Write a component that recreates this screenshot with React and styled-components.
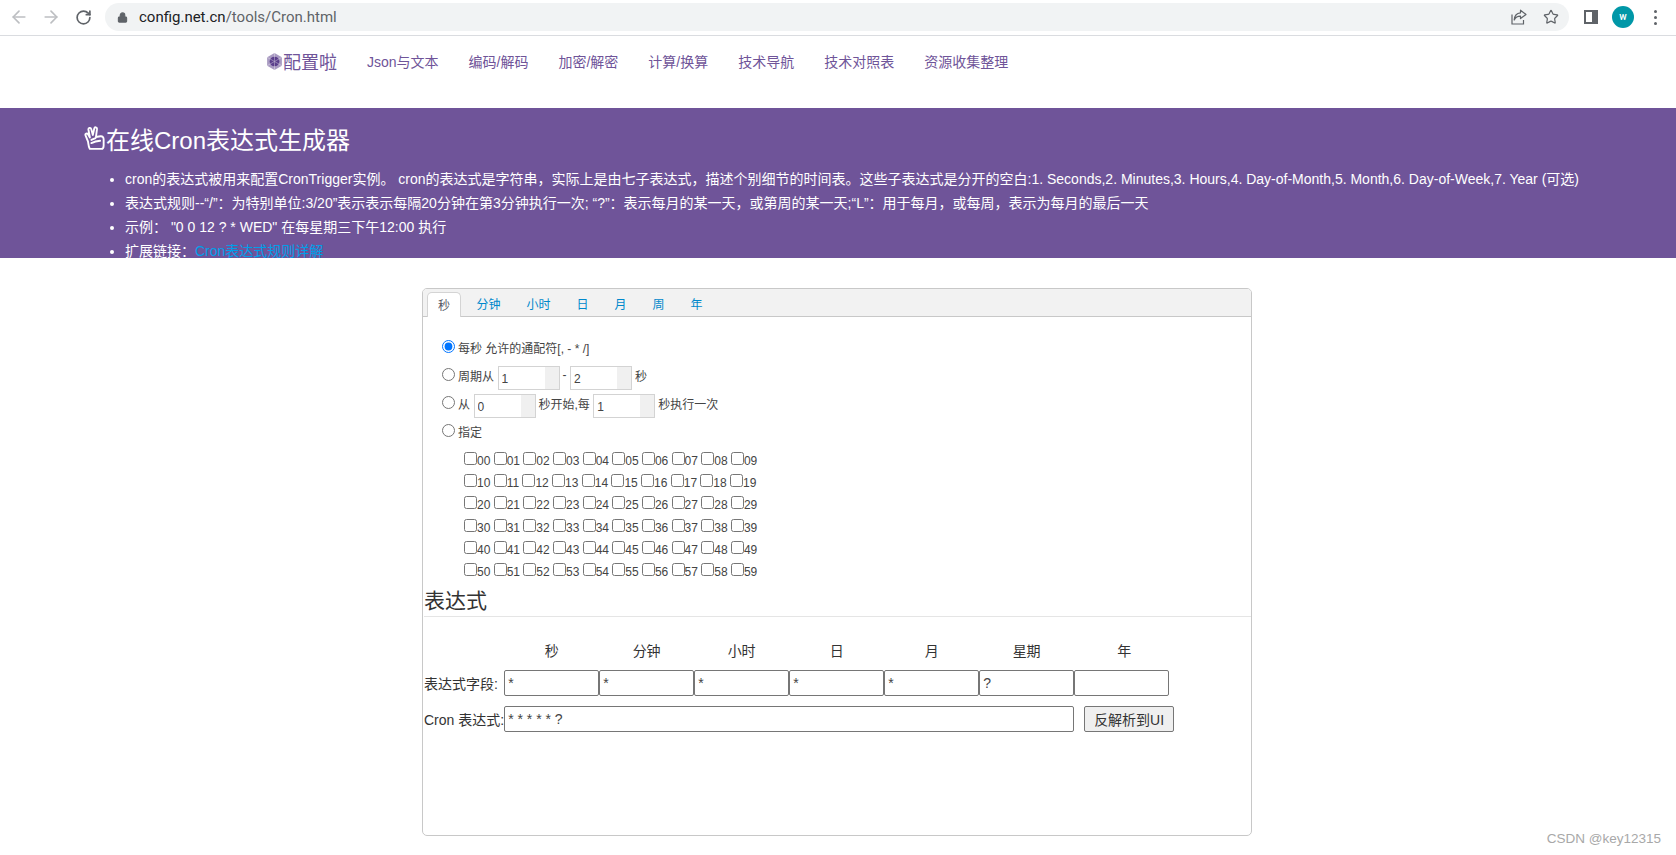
import React from "react";
import styled, { createGlobalStyle } from "styled-components";
import { ArrowLeft, ArrowRight, RotateCw, Lock, Star } from "lucide-react";

const FONT = '"Liberation Sans", "Noto Sans CJK SC", Arial, sans-serif';

const navItems = ["Json与文本", "编码/解码", "加密/解密", "计算/换算", "技术导航", "技术对照表", "资源收集整理"];
const tabs = ["秒", "分钟", "小时", "日", "月", "周", "年"];
const fieldValues = ["*", "*", "*", "*", "*", "?", ""];
const seconds = Array.from({ length: 6 }, (_, r) =>
  Array.from({ length: 10 }, (_, c) => `${r}${c}`)
);

const ShareIcon = () => (
  <svg width="16" height="16" viewBox="0 0 16 16" fill="none" stroke="#5f6368" strokeWidth="1.2">
    <path d="M1 5.5V15H12.5V11" />
    <path d="M9.5 1.2L15 5.4L9.5 9.6V7.2C6.5 7.2 4.5 8.4 3.2 11C3.4 7.2 5.6 4.2 9.5 3.8Z" strokeLinejoin="round" />
  </svg>
);

const HandIcon = () => (
  <svg width="22" height="25" viewBox="0 0 21 24" fill="none" stroke="#fff" strokeWidth="1.8" strokeLinejoin="round" strokeLinecap="round">
    <path d="M5.5 22C4 19 4.2 17 3.8 15L1.4 9C.8 7.4 2.8 6.4 3.8 8L5.6 11L4.2 3.6C3.9 1.6 6.4 1.1 6.9 3L8.4 8.6L9.8 2.4C10.2.6 12.6 1 12.4 3L11.4 10.6L15.8 9.8C18 9.6 18.8 11.2 18.8 13V18.6C18.8 20.4 18 22 16.6 22Z" />
    <path d="M7 13.4L11 11.6M7 16.4C9 15.4 12 14.4 15.4 14.2" />
  </svg>
);

const LogoIcon = () => (
  <svg width="17" height="19" viewBox="0 0 16 18">
    <polygon points="8,1 15,5 15,13 8,17 1,13 1,5" fill="#a99bc2" />
    <circle cx="8" cy="9" r="4.6" fill="#5b3f8c" />
    <path d="M8 1V17M1 5L15 13M15 5L1 13" stroke="#fff" strokeWidth=".6" opacity=".55" />
  </svg>
);

const App = () => (
  <>
    <GlobalStyle />
    <Toolbar>
      <NavIcon $off>
        <ArrowLeft size={20} strokeWidth={2} />
      </NavIcon>
      <NavIcon $off>
        <ArrowRight size={20} strokeWidth={2} />
      </NavIcon>
      <NavIcon>
        <RotateCw size={17} strokeWidth={2.4} />
      </NavIcon>
      <Omnibox>
        <Lock size={11} fill="#5f6368" strokeWidth={2.4} />
        <Url>
          config.net.cn<UrlPath>/tools/Cron.html</UrlPath>
        </Url>
        <OmniActions>
          <ShareIcon />
          <Star size={16} strokeWidth={1.8} />
        </OmniActions>
      </Omnibox>
      <SidePanelIcon />
      <Avatar>w</Avatar>
      <MenuDots>
        <i />
        <i />
        <i />
      </MenuDots>
    </Toolbar>

    <SiteNav>
      <Brand>
        <LogoIcon />
        配置啦
      </Brand>
      {navItems.map((item) => (
        <NavLink key={item} href="#">
          {item}
        </NavLink>
      ))}
    </SiteNav>

    <Banner>
      <BannerTitle>
        <HandIcon />
        在线Cron表达式生成器
      </BannerTitle>
      <BannerList>
        <li>
          cron的表达式被用来配置CronTrigger实例。 cron的表达式是字符串，实际上是由七子表达式，描述个别细节的时间表。这些子表达式是分开的空白:1. Seconds,2. Minutes,3. Hours,4. Day-of-Month,5. Month,6. Day-of-Week,7. Year (可选)
        </li>
        <li>表达式规则--“/”：为特别单位:3/20”表示表示每隔20分钟在第3分钟执行一次; “?”：表示每月的某一天，或第周的某一天;“L”：用于每月，或每周，表示为每月的最后一天</li>
        <li>示例： "0 0 12 ? * WED" 在每星期三下午12:00 执行</li>
        <li>
          扩展链接：<BannerLink href="#">Cron表达式规则详解</BannerLink>
        </li>
      </BannerList>
    </Banner>

    <Panel>
      <TabBar>
        {tabs.map((tab, i) => (
          <Tab key={tab} $active={i === 0}>
            {tab}
          </Tab>
        ))}
      </TabBar>

      <TabBody>
        <OptionRow>
          <Radio name="sec" defaultChecked />
          每秒 允许的通配符[, - * /]
        </OptionRow>
        <OptionRow>
          <Radio name="sec" />
          周期从
          <Spinner value="1" />-<Spinner value="2" />秒
        </OptionRow>
        <OptionRow>
          <Radio name="sec" />从
          <Spinner value="0" />
          秒开始,每
          <Spinner value="1" />
          秒执行一次
        </OptionRow>
        <OptionRow>
          <Radio name="sec" />
          指定
        </OptionRow>
        <SecondGrid>
          {seconds.map((row) => (
            <SecondRow key={row[0]}>
              {row.map((s) => (
                <SecondItem key={s}>
                  <input type="checkbox" />
                  {s}
                </SecondItem>
              ))}
            </SecondRow>
          ))}
        </SecondGrid>
      </TabBody>

      <SectionTitle>表达式</SectionTitle>

      <FieldTable>
        <thead>
          <tr>
            <th />
            {tabs.map((t, i) => (
              <th key={t}>{i === 5 ? "星期" : t}</th>
            ))}
          </tr>
        </thead>
        <tbody>
          <tr>
            <td>表达式字段:</td>
            {fieldValues.map((v, i) => (
              <td key={i}>
                <FieldInput defaultValue={v} />
              </td>
            ))}
          </tr>
          <tr>
            <td>Cron 表达式:</td>
            <td colSpan={6}>
              <CronInput defaultValue="* * * * * ?" />
            </td>
            <td>
              <ParseButton>反解析到UI</ParseButton>
            </td>
          </tr>
        </tbody>
      </FieldTable>
    </Panel>

    <Watermark>CSDN @key12315</Watermark>
  </>
);

const Spinner = ({ value }) => (
  <SpinnerBox>
    <input defaultValue={value} />
    <span />
  </SpinnerBox>
);

const GlobalStyle = createGlobalStyle`
  html, body {
    margin: 0;
    padding: 0;
    background: #fff;
    font-family: ${FONT};
    color: #333;
    overflow: hidden;
  }
  * {
    box-sizing: border-box;
  }
`;

const Toolbar = styled.div`
  height: 36px;
  display: flex;
  align-items: center;
  padding: 0 18px 1px 3px;
  background: #fff;
  border-bottom: 1px solid #dadce0;
`;

const NavIcon = styled.div`
  width: 32px;
  height: 28px;
  flex: none;
  display: flex;
  align-items: center;
  justify-content: center;
  color: ${(p) => (p.$off ? "#bdbfc2" : "#5f6368")};
`;

const Omnibox = styled.div`
  width: 1464px;
  height: 28px;
  flex: none;
  margin-left: 6px;
  padding: 0 10px 0 12px;
  display: flex;
  align-items: center;
  gap: 11px;
  border-radius: 14px;
  background: #f1f3f4;
  color: #5f6368;
`;

const Url = styled.div`
  flex: 1;
  font: 15px Roboto, sans-serif;
  color: #202124;
`;

const UrlPath = styled.span`
  color: #5f6368;
`;

const OmniActions = styled.div`
  display: flex;
  align-items: center;
  gap: 16px;
`;

const SidePanelIcon = styled.div`
  width: 14px;
  height: 14px;
  flex: none;
  margin-left: 15px;
  border: 2px solid #5f6368;
  border-right-width: 6px;
`;

const Avatar = styled.div`
  width: 22px;
  height: 22px;
  flex: none;
  margin-left: 14px;
  border-radius: 50%;
  background: #0097a7;
  color: #fff;
  font: 500 10px/21px Roboto, sans-serif;
  text-align: center;
`;

const MenuDots = styled.div`
  flex: none;
  margin-left: 20px;
  display: flex;
  flex-direction: column;
  gap: 3px;

  i {
    width: 3px;
    height: 3px;
    border-radius: 50%;
    background: #5f6368;
  }
`;

const SiteNav = styled.nav`
  height: 72px;
  padding: 0 0 22px 266px;
  display: flex;
  align-items: center;
  background: #fff;
`;

const Brand = styled.a`
  display: flex;
  align-items: center;
  margin-right: 15px;
  font-size: 18px;
  color: #6f5499;
`;

const NavLink = styled.a`
  padding: 0 15px;
  font-size: 14px;
  color: #6f5499;
  text-decoration: none;
`;

const Banner = styled.div`
  height: 150px;
  padding: 14px 0 0 84px;
  overflow: hidden;
  background: #6f5499;
  color: #fff;
`;

const BannerTitle = styled.h1`
  height: 32px;
  margin: 0;
  display: flex;
  align-items: center;
  font-size: 24px;
  font-weight: 400;
`;

const BannerList = styled.ul`
  margin: 13px 0 0;
  padding: 0 0 0 41px;
  font-size: 14px;
  line-height: 24px;
  white-space: nowrap;
`;

const BannerLink = styled.a`
  color: #00a0e9;
  text-decoration: none;
`;

const Panel = styled.div`
  width: 830px;
  height: 548px;
  margin: 30px 0 0 422px;
  border: 1px solid #c8c8c8;
  border-radius: 5px;
  overflow: hidden;
`;

const TabBar = styled.div`
  height: 28px;
  padding: 3px 0 0 4px;
  display: flex;
  background: #f2f2f2;
  border-bottom: 1px solid #c8c8c8;
`;

const Tab = styled.div`
  height: 25px;
  margin-right: ${(p) => (p.$active ? "2.5px" : "0")};
  padding: 1px ${(p) => (p.$active ? "10px" : "13px")} 0;
  font-size: 12px;
  line-height: 25px;
  color: ${(p) => (p.$active ? "#575765" : "#0088cc")};
  background: ${(p) => (p.$active ? "#fff" : "transparent")};
  border: ${(p) => (p.$active ? "1px solid #d4d4d4" : "none")};
  border-bottom: none;
  border-radius: 5px 5px 0 0;
`;

const TabBody = styled.div`
  padding: 16px 0 0 19px;
  font-size: 12px;
  color: #444;
`;

const OptionRow = styled.div`
  height: 28px;
  display: flex;
  align-items: center;
  white-space: pre;
`;

const Radio = styled.input.attrs({ type: "radio" })`
  width: 13px;
  height: 13px;
  margin: -2px 3px 0 0;
  flex: none;
`;

const SpinnerBox = styled.div`
  width: 62px;
  height: 24px;
  margin: 5px 3px 0 3.5px;
  display: flex;
  border: 1px solid #d3d3d3;

  input {
    flex: 1;
    min-width: 0;
    padding: 3px 0 0 3px;
    border: none;
    outline: none;
    font: 12px ${FONT};
    color: #444;
  }

  span {
    width: 14px;
    background: #f0f0f0;
  }
`;

const SecondGrid = styled.div`
  padding: 3px 0 0 22px;
`;

const SecondRow = styled.div`
  height: 22.2px;
  display: flex;
  gap: 3.3px;
  align-items: center;
`;

const SecondItem = styled.label`
  display: flex;
  align-items: center;
  padding-top: 4px;
  font-size: 12px;
  line-height: 14px;

  input {
    width: 13px;
    height: 13px;
    margin: -5px 0 0;
  }
`;

const SectionTitle = styled.h2`
  margin: 5.3px 0 0 1px;
  height: 31px;
  font-size: 21px;
  line-height: 30px;
  font-weight: 400;
  color: #333;
  border-bottom: 1px solid #e5e5e5;
`;

const FieldTable = styled.table`
  margin: 17.5px 0 0 1px;
  border-collapse: collapse;
  font-size: 14px;
  color: #333;

  th {
    height: 29.6px;
    padding: 0;
    font-weight: 400;
    text-align: center;
  }

  td {
    padding: 0;
    height: 36px;
    white-space: nowrap;
  }

  th:first-child,
  td:first-child {
    width: 80px;
  }

  th:not(:first-child) {
    width: 95px;
  }
`;

const FieldInput = styled.input`
  display: block;
  width: 95px;
  height: 26px;
  padding: 1px 3px;
  border: 1px solid #767676;
  border-radius: 2px;
  font: 14px ${FONT};
  color: #444;
`;

const CronInput = styled(FieldInput)`
  width: 570px;
`;

const ParseButton = styled.button`
  display: block;
  width: 90px;
  height: 26px;
  margin-left: 10px;
  padding: 0;
  border: 1px solid #767676;
  border-radius: 2px;
  background: #efefef;
  font: 14px ${FONT};
  color: #333;
`;

const Watermark = styled.div`
  position: absolute;
  right: 15px;
  bottom: 9px;
  font-size: 13.5px;
  color: #a8a8a8;
`;

export default App;
